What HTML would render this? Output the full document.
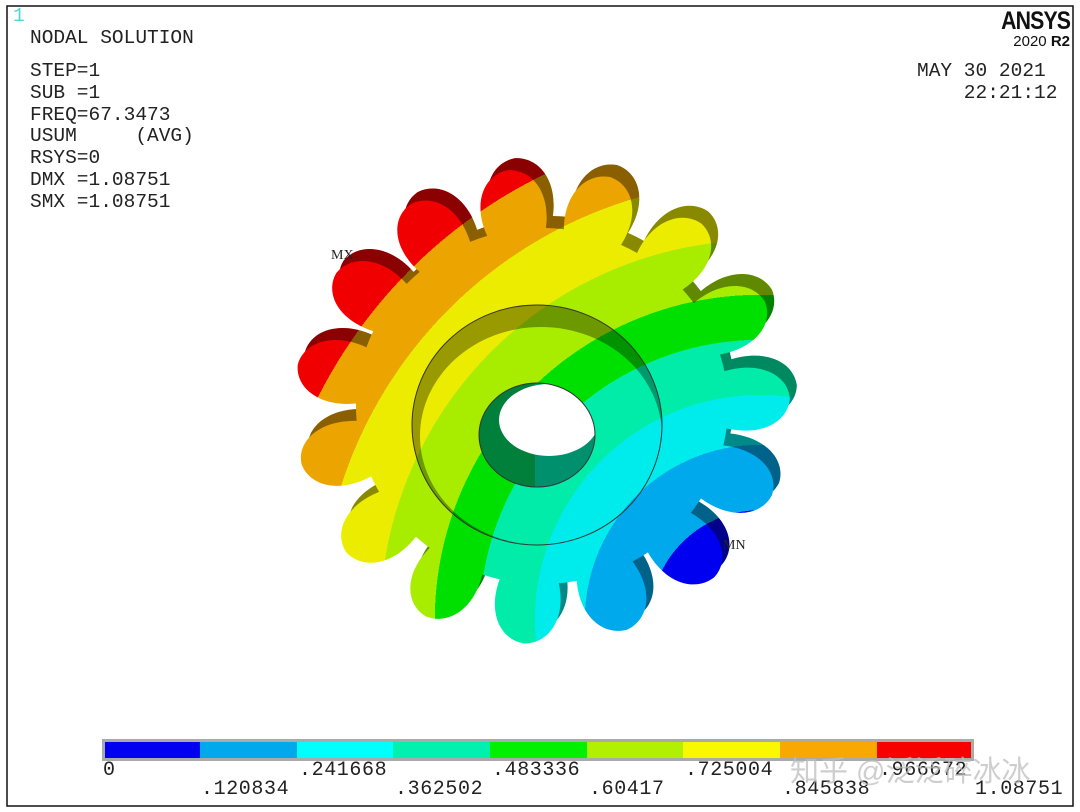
<!DOCTYPE html>
<html><head><meta charset="utf-8"><style>
html,body{margin:0;padding:0;background:#fff;width:1080px;height:812px;overflow:hidden}
.t{position:absolute;font-family:"Liberation Mono",monospace;font-size:19.5px;color:#222;white-space:pre;line-height:21.8px}
.l{position:absolute;font-family:"Liberation Mono",monospace;font-size:20px;color:#222;white-space:pre;letter-spacing:.6px}
</style></head><body>
<svg width="1080" height="812" style="position:absolute;left:0;top:0">
<defs>
<radialGradient id="gr" gradientUnits="userSpaceOnUse" cx="760" cy="620" r="600">
<stop offset="0" stop-color="#0000f0"/><stop offset=".183" stop-color="#0000f0"/>
<stop offset=".183" stop-color="#00a8ec"/><stop offset=".292" stop-color="#00a8ec"/>
<stop offset=".292" stop-color="#00ecec"/><stop offset=".375" stop-color="#00ecec"/>
<stop offset=".375" stop-color="#00eca8"/><stop offset=".467" stop-color="#00eca8"/>
<stop offset=".467" stop-color="#00e000"/><stop offset=".542" stop-color="#00e000"/>
<stop offset=".542" stop-color="#a8ec00"/><stop offset=".633" stop-color="#a8ec00"/>
<stop offset=".633" stop-color="#ecec00"/><stop offset=".733" stop-color="#ecec00"/>
<stop offset=".733" stop-color="#eca400"/><stop offset=".825" stop-color="#eca400"/>
<stop offset=".825" stop-color="#f00000"/><stop offset="1" stop-color="#f00000"/>
</radialGradient>
<clipPath id="cb">
<ellipse cx="549" cy="394" rx="186" ry="178"/>
<path transform="translate(549,394) scale(1,.96) rotate(-8)" d="M-27,-175 C-42,-215 -26,-246 0,-248 C26,-246 42,-215 27,-175 Z"/>
<path transform="translate(549,394) scale(1,.96) rotate(16)" d="M-27,-175 C-42,-215 -26,-246 0,-248 C26,-246 42,-215 27,-175 Z"/>
<path transform="translate(549,394) scale(1,.96) rotate(40)" d="M-27,-175 C-42,-215 -26,-246 0,-248 C26,-246 42,-215 27,-175 Z"/>
<path transform="translate(549,394) scale(1,.96) rotate(64)" d="M-27,-175 C-42,-215 -26,-246 0,-248 C26,-246 42,-215 27,-175 Z"/>
<path transform="translate(549,394) scale(1,.96) rotate(88)" d="M-27,-175 C-42,-215 -26,-246 0,-248 C26,-246 42,-215 27,-175 Z"/>
<path transform="translate(549,394) scale(1,.96) rotate(112)" d="M-27,-175 C-42,-215 -26,-246 0,-248 C26,-246 42,-215 27,-175 Z"/>
<path transform="translate(549,394) scale(1,.96) rotate(136)" d="M-27,-175 C-42,-215 -26,-246 0,-248 C26,-246 42,-215 27,-175 Z"/>
<path transform="translate(549,394) scale(1,.96) rotate(160)" d="M-27,-175 C-42,-215 -26,-246 0,-248 C26,-246 42,-215 27,-175 Z"/>
<path transform="translate(549,394) scale(1,.96) rotate(184)" d="M-27,-175 C-42,-215 -26,-246 0,-248 C26,-246 42,-215 27,-175 Z"/>
<path transform="translate(549,394) scale(1,.96) rotate(208)" d="M-27,-175 C-42,-215 -26,-246 0,-248 C26,-246 42,-215 27,-175 Z"/>
<path transform="translate(549,394) scale(1,.96) rotate(232)" d="M-27,-175 C-42,-215 -26,-246 0,-248 C26,-246 42,-215 27,-175 Z"/>
<path transform="translate(549,394) scale(1,.96) rotate(256)" d="M-27,-175 C-42,-215 -26,-246 0,-248 C26,-246 42,-215 27,-175 Z"/>
<path transform="translate(549,394) scale(1,.96) rotate(280)" d="M-27,-175 C-42,-215 -26,-246 0,-248 C26,-246 42,-215 27,-175 Z"/>
<path transform="translate(549,394) scale(1,.96) rotate(304)" d="M-27,-175 C-42,-215 -26,-246 0,-248 C26,-246 42,-215 27,-175 Z"/>
<path transform="translate(549,394) scale(1,.96) rotate(328)" d="M-27,-175 C-42,-215 -26,-246 0,-248 C26,-246 42,-215 27,-175 Z"/>
</clipPath>
<clipPath id="cf">
<ellipse cx="542" cy="406" rx="186" ry="178"/>
<path transform="translate(542,406) scale(1,.96) rotate(-8)" d="M-27,-175 C-42,-215 -26,-246 0,-248 C26,-246 42,-215 27,-175 Z"/>
<path transform="translate(542,406) scale(1,.96) rotate(16)" d="M-27,-175 C-42,-215 -26,-246 0,-248 C26,-246 42,-215 27,-175 Z"/>
<path transform="translate(542,406) scale(1,.96) rotate(40)" d="M-27,-175 C-42,-215 -26,-246 0,-248 C26,-246 42,-215 27,-175 Z"/>
<path transform="translate(542,406) scale(1,.96) rotate(64)" d="M-27,-175 C-42,-215 -26,-246 0,-248 C26,-246 42,-215 27,-175 Z"/>
<path transform="translate(542,406) scale(1,.96) rotate(88)" d="M-27,-175 C-42,-215 -26,-246 0,-248 C26,-246 42,-215 27,-175 Z"/>
<path transform="translate(542,406) scale(1,.96) rotate(112)" d="M-27,-175 C-42,-215 -26,-246 0,-248 C26,-246 42,-215 27,-175 Z"/>
<path transform="translate(542,406) scale(1,.96) rotate(136)" d="M-27,-175 C-42,-215 -26,-246 0,-248 C26,-246 42,-215 27,-175 Z"/>
<path transform="translate(542,406) scale(1,.96) rotate(160)" d="M-27,-175 C-42,-215 -26,-246 0,-248 C26,-246 42,-215 27,-175 Z"/>
<path transform="translate(542,406) scale(1,.96) rotate(184)" d="M-27,-175 C-42,-215 -26,-246 0,-248 C26,-246 42,-215 27,-175 Z"/>
<path transform="translate(542,406) scale(1,.96) rotate(208)" d="M-27,-175 C-42,-215 -26,-246 0,-248 C26,-246 42,-215 27,-175 Z"/>
<path transform="translate(542,406) scale(1,.96) rotate(232)" d="M-27,-175 C-42,-215 -26,-246 0,-248 C26,-246 42,-215 27,-175 Z"/>
<path transform="translate(542,406) scale(1,.96) rotate(256)" d="M-27,-175 C-42,-215 -26,-246 0,-248 C26,-246 42,-215 27,-175 Z"/>
<path transform="translate(542,406) scale(1,.96) rotate(280)" d="M-27,-175 C-42,-215 -26,-246 0,-248 C26,-246 42,-215 27,-175 Z"/>
<path transform="translate(542,406) scale(1,.96) rotate(304)" d="M-27,-175 C-42,-215 -26,-246 0,-248 C26,-246 42,-215 27,-175 Z"/>
<path transform="translate(542,406) scale(1,.96) rotate(328)" d="M-27,-175 C-42,-215 -26,-246 0,-248 C26,-246 42,-215 27,-175 Z"/>
</clipPath>
<clipPath id="ch"><ellipse cx="537" cy="435" rx="58" ry="52"/></clipPath>
</defs>
<rect x="7" y="6" width="1066" height="800" fill="none" stroke="#111" stroke-width="1.5"/>
<g clip-path="url(#cb)"><rect x="250" y="140" width="580" height="520" fill="url(#gr)"/><rect x="250" y="140" width="580" height="520" fill="#000" opacity=".42"/></g>
<g clip-path="url(#cf)"><rect x="250" y="140" width="580" height="520" fill="url(#gr)"/></g>
<ellipse cx="537" cy="425" rx="125" ry="120" fill="url(#gr)"/>
<ellipse cx="537" cy="425" rx="125" ry="120" fill="#000" opacity=".35"/>
<ellipse cx="541" cy="436" rx="121" ry="109" fill="url(#gr)"/>
<ellipse cx="537" cy="425" rx="125" ry="120" fill="none" stroke="#333" stroke-width="1"/>
<ellipse cx="537" cy="435" rx="58" ry="52" fill="#00803a"/>
<rect x="535" y="380" width="70" height="110" fill="#00906e" clip-path="url(#ch)"/>
<ellipse cx="549" cy="420" rx="50" ry="36" fill="#fff" clip-path="url(#ch)"/>
<ellipse cx="537" cy="435" rx="58" ry="52" fill="none" stroke="#333" stroke-width="1"/>
<text x="331" y="259" font-family="Liberation Serif,serif" font-size="14" fill="#222">MX</text>
<text x="723" y="549" font-family="Liberation Serif,serif" font-size="14" fill="#222">MN</text>
<rect x="102" y="739" width="872" height="22" fill="#aaa"/>
<rect x="105" y="742" width="95" height="16" fill="#0000f0"/>
<rect x="200" y="742" width="97" height="16" fill="#00a8ec"/>
<rect x="297" y="742" width="96" height="16" fill="#00ffff"/>
<rect x="393" y="742" width="97" height="16" fill="#00f0b0"/>
<rect x="490" y="742" width="97" height="16" fill="#00f000"/>
<rect x="587" y="742" width="96" height="16" fill="#b0f000"/>
<rect x="683" y="742" width="97" height="16" fill="#f8f800"/>
<rect x="780" y="742" width="97" height="16" fill="#f8a800"/>
<rect x="877" y="742" width="94" height="16" fill="#f80000"/>
</svg>
<div class="t" style="left:13px;top:6px;color:#4fd8d8">1</div>
<div class="t" style="left:30px;top:28px">NODAL SOLUTION</div>
<div class="t" style="left:30px;top:61px">STEP=1
SUB =1
FREQ=67.3473
USUM     (AVG)
RSYS=0
DMX =1.08751
SMX =1.08751</div>
<div class="t" style="left:917px;top:61px">MAY 30 2021
    22:21:12</div>
<div style="position:absolute;right:10px;top:7px;font-family:'Liberation Sans',sans-serif;font-weight:bold;font-size:25px;letter-spacing:-1px;color:#111;transform:scaleX(.85);transform-origin:right">ANSYS</div>
<div style="position:absolute;right:10px;top:33px;font-family:'Liberation Sans',sans-serif;font-size:15px;color:#111">2020 <b>R2</b></div>
<div class="l" style="left:103px;top:759px">0</div>
<div class="l" style="left:299px;top:759px">.241668</div>
<div class="l" style="left:492px;top:759px">.483336</div>
<div class="l" style="left:685px;top:759px">.725004</div>
<div class="l" style="left:879px;top:759px">.966672</div>
<div class="l" style="left:201px;top:778px">.120834</div>
<div class="l" style="left:395px;top:778px">.362502</div>
<div class="l" style="left:589px;top:778px">.60417</div>
<div class="l" style="left:782px;top:778px">.845838</div>
<div class="l" style="left:975px;top:778px">1.08751</div>
<div style="position:absolute;left:790px;top:748px;font-family:'Liberation Sans','Noto Sans CJK SC',sans-serif;font-size:29px;color:rgba(190,190,190,.75)">知乎 @泛泛碎冰冰</div>
</body></html>
